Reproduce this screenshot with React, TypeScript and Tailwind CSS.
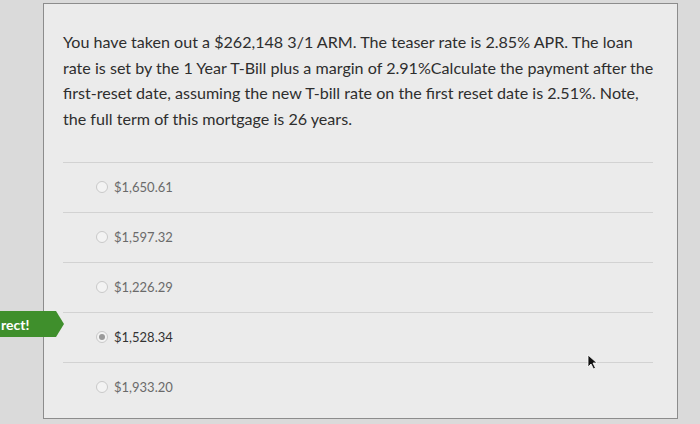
import React from 'react'

const options = [
  { label: '$1,650.61', selected: false },
  { label: '$1,597.32', selected: false },
  { label: '$1,226.29', selected: false },
  { label: '$1,528.34', selected: true },
  { label: '$1,933.20', selected: false },
]

function Radio({ selected }: { selected: boolean }) {
  return (
    <span className="w-[12px] h-[12px] rounded-full border border-[#c9c9c9] bg-[#f3f3f3] flex items-center justify-center flex-shrink-0">
      {selected && <span className="w-[6px] h-[6px] rounded-full bg-[#9a9a9a]" />}
    </span>
  )
}

export default function App() {
  return (
    <div
      className="relative w-[700px] h-[424px] overflow-hidden bg-[#dadada]"
      style={{ fontFamily: 'Lato, "Open Sans", sans-serif' }}
    >
      <div className="ml-[43px] mt-[3px] w-[635px] h-[416px] border border-[#8c8c8c] bg-[#ebebeb]">
        {/* Question */}
        <div className="pl-[19px] pt-[25px] text-[16.1px] leading-[25.7px] text-[#2e2e2e]">
          <span className="block whitespace-nowrap">You have taken out a $262,148 3/1 ARM. The teaser rate is 2.85% APR. The loan</span>
          <span className="block whitespace-nowrap">rate is set by the 1 Year T-Bill plus a margin of 2.91%Calculate the payment after the</span>
          <span className="block whitespace-nowrap">first-reset date, assuming the new T-bill rate on the first reset date is 2.51%. Note,</span>
          <span className="block whitespace-nowrap">the full term of this mortgage is 26 years.</span>
        </div>

        {/* Answers */}
        <div className="mt-[30px] ml-[19px] mr-[24px]">
          {options.map((opt) => (
            <div key={opt.label} className="h-[50px] border-t border-[#d2d2d2] flex items-center gap-[6px] pl-[33px]">
              <Radio selected={opt.selected} />
              <span className={`text-[13px] ${opt.selected ? 'text-[#333333]' : 'text-[#6a6a6a]'}`}>{opt.label}</span>
            </div>
          ))}
        </div>
      </div>

      {/* Correct badge (cut off at the window edge) */}
      <div className="absolute left-0 top-[311px] flex items-center">
        <div className="h-[26px] w-[56px] bg-[#3f8f2c] flex items-center pl-[1px] text-white text-[14px] font-bold">
          rect!
        </div>
        <div className="w-0 h-0 border-t-[13px] border-b-[13px] border-l-[8px] border-t-transparent border-b-transparent border-l-[#3f8f2c]" />
      </div>

      {/* Mouse cursor */}
      <svg className="absolute left-[587px] top-[354px]" width="11" height="16" viewBox="0 0 11 16">
        <path d="M1 1 L1 13 L4 10 L6.5 15 L8.5 14 L6 9 L10 9 Z" fill="#111" stroke="#fff" strokeWidth="0.8" />
      </svg>
    </div>
  )
}
